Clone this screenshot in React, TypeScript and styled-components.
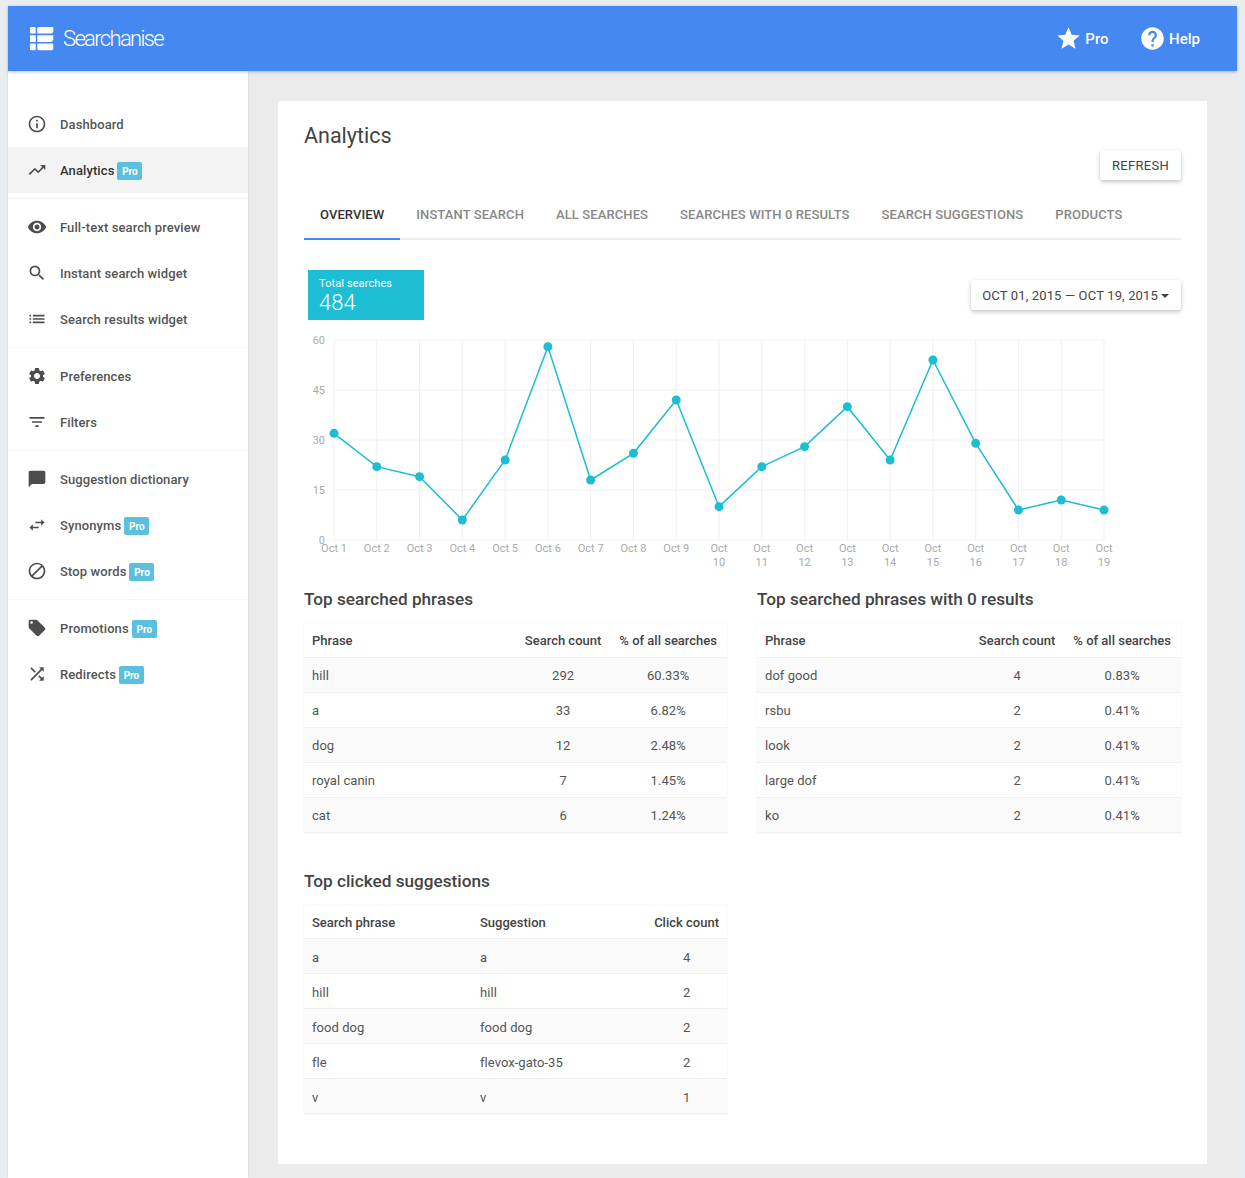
import React from 'react';
import styled, { createGlobalStyle } from 'styled-components';
import {
  MdInfoOutline,
  MdTrendingUp,
  MdVisibility,
  MdSearch,
  MdList,
  MdSettings,
  MdFilterList,
  MdChatBubble,
  MdSwapHoriz,
  MdBlock,
  MdLocalOffer,
  MdShuffle,
  MdStar,
  MdHelp,
} from 'react-icons/md';

const navGroups = [
  [
    { label: 'Dashboard', icon: MdInfoOutline },
    { label: 'Analytics', icon: MdTrendingUp, pro: true, active: true },
  ],
  [
    { label: 'Full-text search preview', icon: MdVisibility },
    { label: 'Instant search widget', icon: MdSearch },
    { label: 'Search results widget', icon: MdList },
  ],
  [
    { label: 'Preferences', icon: MdSettings },
    { label: 'Filters', icon: MdFilterList },
  ],
  [
    { label: 'Suggestion dictionary', icon: MdChatBubble },
    { label: 'Synonyms', icon: MdSwapHoriz, pro: true },
    { label: 'Stop words', icon: MdBlock, pro: true },
  ],
  [
    { label: 'Promotions', icon: MdLocalOffer, pro: true },
    { label: 'Redirects', icon: MdShuffle, pro: true },
  ],
];

const tabs = ['Overview', 'Instant search', 'All searches', 'Searches with 0 results', 'Search suggestions', 'Products'];

const chartValues = [32, 22, 19, 6, 24, 58, 18, 26, 42, 10, 22, 28, 40, 24, 54, 29, 9, 12, 9];

const topPhrases = [
  ['hill', '292', '60.33%'],
  ['a', '33', '6.82%'],
  ['dog', '12', '2.48%'],
  ['royal canin', '7', '1.45%'],
  ['cat', '6', '1.24%'],
];

const zeroPhrases = [
  ['dof good', '4', '0.83%'],
  ['rsbu', '2', '0.41%'],
  ['look', '2', '0.41%'],
  ['large dof', '2', '0.41%'],
  ['ko', '2', '0.41%'],
];

const suggestions = [
  ['a', 'a', '4'],
  ['hill', 'hill', '2'],
  ['food dog', 'food dog', '2'],
  ['fle', 'flevox-gato-35', '2'],
  ['v', 'v', '1'],
];

const CHART_LEFT = 30;
const CHART_TOP = 5;
const STEP_X = 42.78;
const CHART_HEIGHT = 200;

const pointX = (i: number) => CHART_LEFT + i * STEP_X;
const pointY = (v: number) => CHART_TOP + CHART_HEIGHT - (v * CHART_HEIGHT) / 60;

const Logo = () => (
  <svg width="24" height="24" viewBox="0 0 24 24" fill="#fff">
    <rect x="0" y="0" width="5.7" height="6.6" rx="1" />
    <rect x="0" y="8.3" width="5.7" height="6.7" />
    <rect x="0" y="16.6" width="5.7" height="6.7" rx="1" />
    <path d="M7.3 1.5a1.5 1.5 0 0 1 1.5-1.5H23.3V5L21.6 6.6H7.3z" />
    <path d="M7.3 8.3H23.3V13L21.4 15H7.3z" />
    <path d="M7.3 16.6H23.3V21.5a1.8 1.8 0 0 1-1.8 1.8H8.8A1.5 1.5 0 0 1 7.3 21.8z" />
  </svg>
);

const Chart = () => {
  const line = chartValues.map((v, i) => `${pointX(i)},${pointY(v)}`).join(' ');
  return (
    <ChartSvg width="877" height="240" viewBox="0 0 877 240">
      {[60, 45, 30, 15, 0].map((v) => (
        <g key={v}>
          <line x1={CHART_LEFT} x2={pointX(18)} y1={pointY(v)} y2={pointY(v)} stroke="#f0f0f0" />
          <AxisText x={CHART_LEFT - 9} y={pointY(v) + 4} textAnchor="end">
            {v}
          </AxisText>
        </g>
      ))}
      {chartValues.map((_, i) => (
        <line key={i} x1={pointX(i)} x2={pointX(i)} y1={pointY(60)} y2={pointY(0)} stroke="#f0f0f0" />
      ))}
      {chartValues.map((_, i) =>
        i < 9 ? (
          <AxisText key={i} x={pointX(i)} y={CHART_TOP + CHART_HEIGHT + 12} textAnchor="middle">
            Oct {i + 1}
          </AxisText>
        ) : (
          <AxisText key={i} x={pointX(i)} textAnchor="middle">
            <tspan x={pointX(i)} y={CHART_TOP + CHART_HEIGHT + 12}>
              Oct
            </tspan>
            <tspan x={pointX(i)} y={CHART_TOP + CHART_HEIGHT + 26}>
              {i + 1}
            </tspan>
          </AxisText>
        ),
      )}
      <polyline points={line} fill="none" stroke="#1dbdd4" strokeWidth="1.5" />
      {chartValues.map((v, i) => (
        <circle key={i} cx={pointX(i)} cy={pointY(v)} r="4.5" fill="#1dbdd4" />
      ))}
    </ChartSvg>
  );
};

const DataTable = ({ head, rows, wide }: { head: string[]; rows: string[][]; wide?: boolean }) => (
  <Table $wide={wide}>
    <thead>
      <tr>
        {head.map((h, i) => (
          <HeadCell
            key={h}
            $center={i === head.length - 1 || (!wide && i > 0)}
            $width={wide ? ['167px', 'auto', '1px'][i] : ['100%', '1px', '1px'][i]}
          >
            {h}
          </HeadCell>
        ))}
      </tr>
    </thead>
    <tbody>
      {rows.map((row, r) => (
        <Row key={r}>
          {row.map((cell, i) => (
            <Cell key={i} $center={i === row.length - 1 || (!wide && i > 0)}>
              {cell}
            </Cell>
          ))}
        </Row>
      ))}
    </tbody>
  </Table>
);

const App = () => (
  <>
    <GlobalStyle />
    <Page>
      <TopBar>
        <Brand>
          <Logo />
          <BrandName>Searchanise</BrandName>
        </Brand>
        <TopLinks>
          <TopLink>
            <MdStar size={27} />
            Pro
          </TopLink>
          <TopLink>
            <MdHelp size={27} />
            Help
          </TopLink>
        </TopLinks>
      </TopBar>
      <Body>
        <Sidebar>
          {navGroups.map((group, g) => (
            <NavGroup key={g}>
              {group.map((item) => (
                <NavItem key={item.label} $active={item.active}>
                  <item.icon size={20} />
                  <NavLabel>{item.label}</NavLabel>
                  {item.pro && <ProBadge>Pro</ProBadge>}
                </NavItem>
              ))}
            </NavGroup>
          ))}
        </Sidebar>
        <Main>
          <Card>
            <Title>Analytics</Title>
            <RefreshRow>
              <RaisedButton>Refresh</RaisedButton>
            </RefreshRow>
            <Tabs>
              {tabs.map((tab, i) => (
                <Tab key={tab} $active={i === 0}>
                  {tab}
                </Tab>
              ))}
            </Tabs>
            <ChartHead>
              <TotalBox>
                <TotalLabel>Total searches</TotalLabel>
                <TotalValue>484</TotalValue>
              </TotalBox>
              <DateButton>
                Oct 01, 2015 — Oct 19, 2015
                <Caret />
              </DateButton>
            </ChartHead>
            <Chart />
            <TableGrid>
              <section>
                <SectionTitle>Top searched phrases</SectionTitle>
                <DataTable head={['Phrase', 'Search count', '% of all searches']} rows={topPhrases} />
              </section>
              <section>
                <SectionTitle>Top searched phrases with 0 results</SectionTitle>
                <DataTable head={['Phrase', 'Search count', '% of all searches']} rows={zeroPhrases} />
              </section>
              <section>
                <SectionTitle>Top clicked suggestions</SectionTitle>
                <DataTable head={['Search phrase', 'Suggestion', 'Click count']} rows={suggestions} wide />
              </section>
            </TableGrid>
          </Card>
        </Main>
      </Body>
    </Page>
  </>
);

const GlobalStyle = createGlobalStyle`
  html, body {
    margin: 0;
    padding: 0;
    background: #e9edf0;
  }
  body {
    font-family: Roboto, "Liberation Sans", sans-serif;
    color: #444;
  }
`;

const Page = styled.div`
  margin: 6px 8px 0;
  min-height: 1172px;
  background: #ebebeb;
  display: flex;
  flex-direction: column;
`;

const TopBar = styled.header`
  height: 65px;
  background: #4688f1;
  box-shadow: 0 1px 3px rgba(0, 0, 0, 0.25);
  display: flex;
  align-items: center;
  justify-content: space-between;
  padding: 0 37px 0 22px;
  position: relative;
  z-index: 1;
`;

const Brand = styled.div`
  display: flex;
  align-items: center;
  gap: 9px;
`;

const BrandName = styled.span`
  color: #fff;
  font-size: 22px;
  font-weight: 300;
  letter-spacing: -1.65px;
`;

const TopLinks = styled.div`
  display: flex;
  align-items: center;
  gap: 30px;
`;

const TopLink = styled.a`
  display: flex;
  align-items: center;
  gap: 3.5px;
  color: #fff;
  font-size: 15px;
  font-weight: 500;
`;

const Body = styled.div`
  flex: 1;
  display: flex;
`;

const Sidebar = styled.nav`
  width: 240px;
  box-sizing: border-box;
  background: #fff;
  padding-top: 25px;
  box-shadow: 0 0 2px rgba(0, 0, 0, 0.12);
`;

const NavGroup = styled.div`
  padding: 5px 0;
  border-bottom: 1px solid #f5f5f5;

  &:last-child {
    border-bottom: none;
  }
`;

const NavItem = styled.a<{ $active?: boolean }>`
  height: 46px;
  display: flex;
  align-items: center;
  padding-left: 18.5px;
  background: ${(p) => (p.$active ? '#f3f3f3' : 'transparent')};
  color: ${(p) => (p.$active ? '#333' : '#555')};

  svg {
    color: #4d4d4d;
    flex: none;
  }
`;

const NavLabel = styled.span`
  margin-left: 13.5px;
  font-size: 13px;
  font-weight: 500;
  letter-spacing: 0.1px;
`;

const ProBadge = styled.span`
  margin: 2px 0 0 3px;
  width: 25px;
  height: 18px;
  border-radius: 2px;
  background: #5bc0de;
  color: #fff;
  font-size: 10px;
  font-weight: 700;
  display: flex;
  align-items: center;
  justify-content: center;
`;

const Main = styled.main`
  flex: 1;
  padding: 30px 30px 0;
`;

const Card = styled.div`
  background: #fff;
  height: 1063px;
  box-sizing: border-box;
  padding: 22px 26px 0;
`;

const Title = styled.h1`
  margin: 0;
  font-size: 21.5px;
  line-height: 26px;
  font-weight: 400;
  color: #444;
`;

const RefreshRow = styled.div`
  display: flex;
  justify-content: flex-end;
  margin-top: 1px;
`;

const RaisedButton = styled.button`
  height: 30px;
  padding: 0 12px;
  border: none;
  border-radius: 2px;
  background: #fff;
  color: #444;
  font: 400 13px Roboto, sans-serif;
  letter-spacing: 0.3px;
  text-transform: uppercase;
  box-shadow: 0 2px 4px rgba(0, 0, 0, 0.22), 0 0 1px rgba(0, 0, 0, 0.12);
`;

const Tabs = styled.div`
  display: flex;
  height: 60px;
  box-sizing: border-box;
  border-bottom: 2px solid #eee;
`;

const Tab = styled.div<{ $active?: boolean }>`
  padding: 0 16px;
  height: 60px;
  box-sizing: border-box;
  line-height: 69px;
  font-size: 13px;
  font-weight: 500;
  letter-spacing: 0.1px;
  text-transform: uppercase;
  color: ${(p) => (p.$active ? '#333' : '#888')};
  border-bottom: 2px solid ${(p) => (p.$active ? '#4688f1' : 'transparent')};
`;

const ChartHead = styled.div`
  display: flex;
  align-items: center;
  justify-content: space-between;
  margin-top: 30px;
  padding-left: 4px;
`;

const TotalBox = styled.div`
  width: 116px;
  height: 50px;
  box-sizing: border-box;
  padding: 7px 11px;
  background: #1dbdd4;
  color: #fff;
`;

const TotalLabel = styled.div`
  font-size: 11px;
  line-height: 14px;
  letter-spacing: 0.1px;
`;

const TotalValue = styled.div`
  font-size: 22px;
  font-weight: 300;
  line-height: 24px;
`;

const DateButton = styled(RaisedButton)`
  display: flex;
  align-items: center;
  gap: 3px;
  padding: 0 12px 0 11px;
  letter-spacing: 0.15px;
`;

const Caret = styled.span`
  width: 0;
  height: 0;
  border-left: 4px solid transparent;
  border-right: 4px solid transparent;
  border-top: 4px solid #444;
  margin-top: 2px;
`;

const ChartSvg = styled.svg`
  display: block;
  margin-top: 15px;
`;

const AxisText = styled.text`
  font-family: Roboto, sans-serif;
  font-size: 11px;
  fill: #aaa;
`;

const TableGrid = styled.div`
  display: grid;
  grid-template-columns: 423px 424px;
  column-gap: 30px;
  row-gap: 37px;
  margin-top: 13px;
`;

const SectionTitle = styled.h2`
  margin: 0 0 13px;
  font-size: 17.2px;
  line-height: 22px;
  font-weight: 500;
  color: #444;
`;

const HeadCell = styled.th<{ $center?: boolean; $width: string }>`
  height: 34px;
  padding: 2px 9px 0;
  box-sizing: border-box;
  text-align: ${(p) => (p.$center ? 'center' : 'left')};
  font-weight: 500;
  color: #444;
  border-bottom: 1px solid #f0f0f0;
  white-space: nowrap;
  width: ${(p) => p.$width};

  &:first-child {
    padding-left: 8px;
  }
`;

const Row = styled.tr`
  &:nth-child(odd) {
    background: #fafafa;
  }
`;

const Cell = styled.td<{ $center?: boolean }>`
  height: 35px;
  padding: 2px 9px 0;
  box-sizing: border-box;
  text-align: ${(p) => (p.$center ? 'center' : 'left')};
  color: #555;
  letter-spacing: 0.05px;
  border-bottom: 1px solid #f0f0f0;

  &:first-child {
    padding-left: 8px;
  }
`;

const Table = styled.table<{ $wide?: boolean }>`
  width: 100%;
  border-collapse: collapse;
  box-shadow: 0 0 1px rgba(0, 0, 0, 0.12);
  font-size: 13px;

  ${HeadCell}:last-child, ${Cell}:last-child {
    padding-right: ${(p) => (p.$wide ? '8px' : '10px')};
  }
`;

export default App;
